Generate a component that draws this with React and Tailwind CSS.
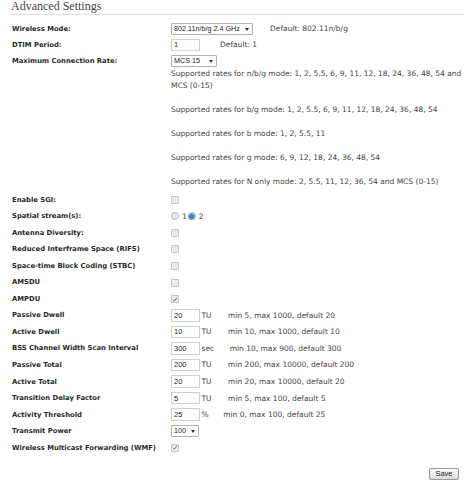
import React from "react";

const rateLines = [
  "Supported rates for n/b/g mode: 1, 2, 5.5, 6, 9, 11, 12, 18, 24, 36, 48, 54 and",
  "MCS (0-15)",
  "",
  "Supported rates for b/g mode: 1, 2, 5.5, 6, 9, 11, 12, 18, 24, 36, 48, 54",
  "",
  "Supported rates for b mode: 1, 2, 5.5, 11",
  "",
  "Supported rates for g mode: 6, 9, 12, 18, 24, 36, 48, 54",
  "",
  "Supported rates for N only mode: 2, 5.5, 11, 12, 36, 54 and MCS (0-15)",
];

const numberRows = [
  { label: "Passive Dwell", value: "20", unit: "TU", gap: "ml-[16.5px]", hint: "min 5, max 1000, default 20" },
  { label: "Active Dwell", value: "10", unit: "TU", gap: "ml-[16.5px]", hint: "min 10, max 1000, default 10" },
  { label: "BSS Channel Width Scan Interval", value: "300", unit: "sec", gap: "ml-[15.5px]", hint: "min 10, max 900, default 300" },
  { label: "Passive Total", value: "200", unit: "TU", gap: "ml-[16.5px]", hint: "min 200, max 10000, default 200" },
  { label: "Active Total", value: "20", unit: "TU", gap: "ml-[16.5px]", hint: "min 20, max 10000, default 20" },
  { label: "Transition Delay Factor", value: "5", unit: "TU", gap: "ml-[16.5px]", hint: "min 5, max 100, default 5" },
  { label: "Activity Threshold", value: "25", unit: "%", gap: "ml-[14.5px]", hint: "min 0, max 100, default 25" },
];

function Label({ children }) {
  return (
    <div className="w-[161px] shrink-0 pl-[2px] font-['DejaVu_Sans',sans-serif] text-[6.8px] font-bold text-[#2a2a2a]">
      {children}
    </div>
  );
}

function Row({ label, children, height = "h-[16.53px]" }) {
  return (
    <div className={"flex items-center " + height}>
      <Label>{label}</Label>
      <div className="flex items-center">{children}</div>
    </div>
  );
}

function FakeSelect({ value, width }) {
  return (
    <div
      className={
        "flex h-[12px] items-center justify-between rounded-[1px] border border-[#b0b0b0] bg-white pl-[2px] pr-[3px] font-['Liberation_Sans',sans-serif] text-[7.2px] text-[#222] " +
        width
      }
    >
      <span>{value}</span>
      <span className="h-0 w-0 border-x-[2.5px] border-t-[3px] border-x-transparent border-t-[#333]" />
    </div>
  );
}

function FakeInput({ value }) {
  return (
    <div className="flex h-[12.5px] w-[29px] items-center border border-[#cfcfcf] bg-white pl-[2px] font-['Liberation_Sans',sans-serif] text-[7.5px] text-[#222]">
      {value}
    </div>
  );
}

function Checkbox({ checked }) {
  return (
    <div className="flex h-[8px] w-[8px] items-center justify-center rounded-[1px] border border-[#c4c4c4] bg-[#ebebeb]">
      {checked && (
        <svg width="7" height="7" viewBox="0 0 7 7">
          <path d="M1.3 3.8 L2.8 5.4 L5.8 1.4" fill="none" stroke="#4a5a6a" strokeWidth="1" />
        </svg>
      )}
    </div>
  );
}

function Radio({ checked }) {
  return (
    <div className="flex h-[8px] w-[8px] items-center justify-center rounded-full border border-[#b5b5b5] bg-[#ececec]">
      {checked && <div className="h-[5px] w-[5px] rounded-full bg-[#4f7fae] ring-1 ring-[#8fb0cf]" />}
    </div>
  );
}

export default function App() {
  return (
    <div className="h-[483px] w-[474px] overflow-hidden bg-white font-['DejaVu_Sans',sans-serif] text-[7.5px] text-[#444]">
      <div className="mx-[10px] h-[15px] border-b border-[#dedede] pl-[1px] font-['Liberation_Serif',serif] text-[12px] leading-[12px] text-[#444]">
        Advanced Settings
      </div>

      <div className="mt-[6px] px-[10px]">
        <Row label="Wireless Mode:" height="h-[16px]">
          <FakeSelect value="802.11n/b/g 2.4 GHz" width="w-[82px]" />
          <span className="ml-[17px]">Default: 802.11n/b/g</span>
        </Row>
        <Row label="DTIM Period:" height="h-[16px]">
          <FakeInput value="1" />
          <span className="ml-[20px]">Default: 1</span>
        </Row>

        <div className="flex items-start">
          <div className="flex h-[16px] items-center">
            <Label>Maximum Connection Rate:</Label>
          </div>
          <div>
            <div className="flex h-[16px] items-center">
              <FakeSelect value="MCS 15" width="w-[46px]" />
            </div>
            <div className="mt-[-1px] leading-[12px]">
              {rateLines.map((line, i) => (
                <div key={i} className="h-[12px] whitespace-nowrap">
                  {line}
                </div>
              ))}
            </div>
          </div>
        </div>

        <div className="mt-[3.7px]">
          <Row label="Enable SGI:">
            <Checkbox />
          </Row>
          <Row label="Spatial stream(s):">
            <Radio />
            <span className="ml-[3px]">1</span>
            <span className="ml-[1px]" />
            <Radio checked />
            <span className="ml-[3px]">2</span>
          </Row>
          <Row label="Antenna Diversity:">
            <Checkbox />
          </Row>
          <Row label="Reduced Interframe Space (RIFS)">
            <Checkbox />
          </Row>
          <Row label="Space-time Block Coding (STBC)">
            <Checkbox />
          </Row>
          <Row label="AMSDU">
            <Checkbox />
          </Row>
          <Row label="AMPDU">
            <Checkbox checked />
          </Row>
          {numberRows.map((r) => (
            <Row key={r.label} label={r.label}>
              <FakeInput value={r.value} />
              <span className="ml-[1.5px]">{r.unit}</span>
              <span className={r.gap}>{r.hint}</span>
            </Row>
          ))}
          <Row label="Transmit Power">
            <FakeSelect value="100" width="w-[28px]" />
          </Row>
          <Row label="Wireless Multicast Forwarding (WMF)">
            <Checkbox checked />
          </Row>
        </div>

        <div className="mt-[11.7px] flex justify-end pr-[5px]">
          <button className="flex h-[12.5px] w-[30px] items-center justify-center rounded-[2px] border border-[#9a9a9a] bg-gradient-to-b from-[#fbfbfb] to-[#dcdcdc] font-['Liberation_Sans',sans-serif] text-[7.5px] text-[#222]">
            Save
          </button>
        </div>
      </div>
    </div>
  );
}
